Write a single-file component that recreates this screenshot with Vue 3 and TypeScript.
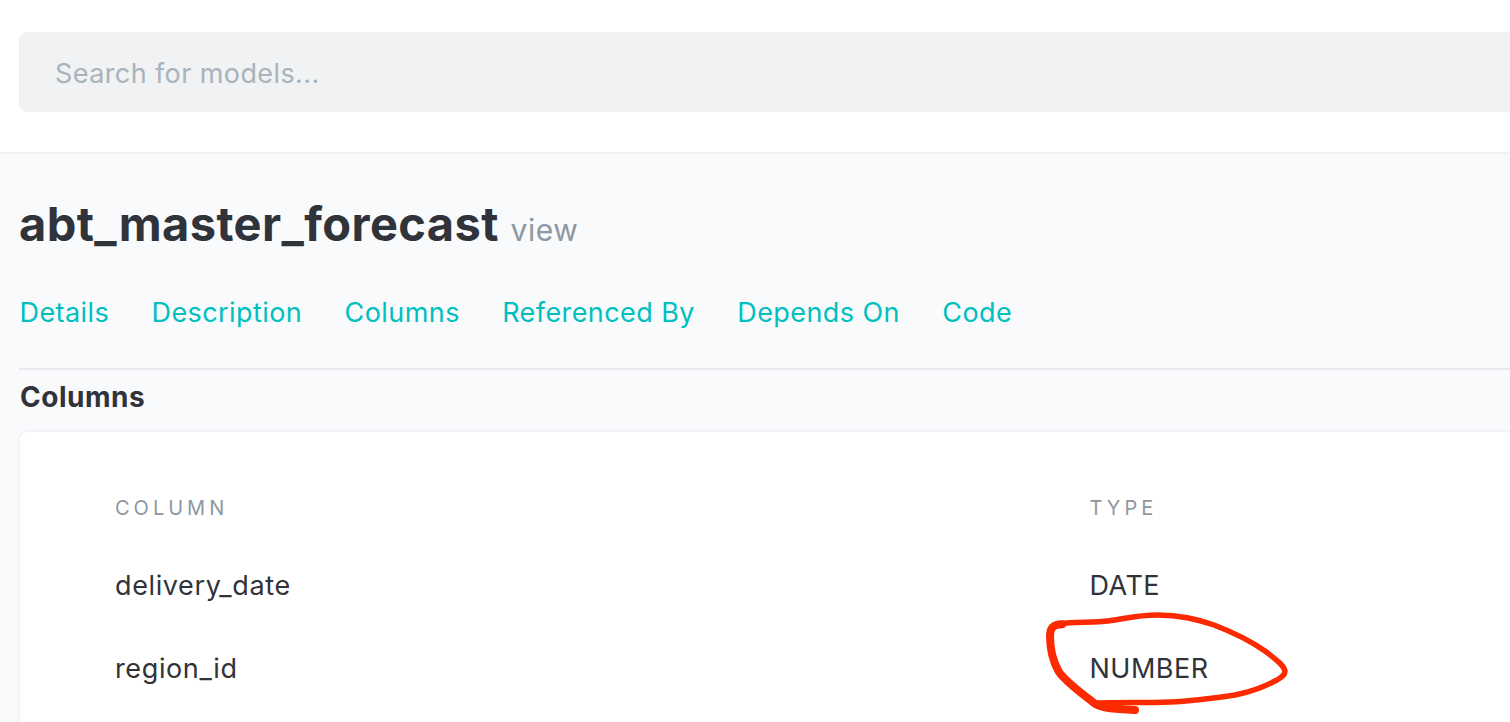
<script setup lang="ts">
const tabs = ['Details', 'Description', 'Columns', 'Referenced By', 'Depends On', 'Code']

const columns = [
  { name: 'delivery_date', type: 'DATE' },
  { name: 'region_id', type: 'NUMBER' },
]
</script>

<template>
  <div class="page">
    <header class="top">
      <div class="search">Search for models...</div>
    </header>
    <main class="content">
      <h1 class="title">abt_master_forecast <small>view</small></h1>
      <nav class="tabs">
        <a v-for="tab in tabs" :key="tab">{{ tab }}</a>
      </nav>
      <section class="section">
        <h2>Columns</h2>
        <div class="card">
          <div class="row head">
            <span>COLUMN</span>
            <span>TYPE</span>
          </div>
          <div v-for="col in columns" :key="col.name" class="row">
            <span class="name">{{ col.name }}</span>
            <span>{{ col.type }}</span>
          </div>
        </div>
      </section>
    </main>
    <svg class="scribble" width="280" height="132" viewBox="1030 590 280 132" fill="none" stroke="#fb2a00" stroke-linecap="round" stroke-linejoin="round">
      <path stroke-width="5.5" d="M1060 623.5 C1075 622 1095 622.5 1108 621 C1125 619 1135 615 1158 615 C1180 615 1195 619 1214 625 C1235 633 1252 642 1265 651 C1274 658 1284 665 1285 671 C1285 675 1282 677 1277 680 C1265 686 1255 691 1235 695 C1215 698 1195 701 1170 702 C1145 703 1120 702 1097 703" />
      <path stroke-width="8" d="M1062 624.3 C1053 624.5 1050 628 1050 636 C1050 650 1052 660 1059 672 C1066 682 1080 692 1094 703 C1101 708 1112 709 1135 710" />
    </svg>
  </div>
</template>

<style scoped>
.page {
  position: relative;
  width: 1510px;
  height: 722px;
  overflow: hidden;
  background: #fff;
  font-family: Inter, "Liberation Sans", sans-serif;
  color: #30333a;
}

.top {
  box-sizing: border-box;
  height: 154px;
  padding: 32px 0 0 19px;
  border-bottom: 2px solid #eff1f3;
}

.search {
  box-sizing: border-box;
  width: 1600px;
  height: 80px;
  padding-left: 36px;
  border-radius: 8px;
  background: #f0f2f4;
  color: #a9b3bb;
  font-size: 27px;
  letter-spacing: 0.4px;
  line-height: 83px;
}

.content {
  box-sizing: border-box;
  height: 568px;
  padding: 40px 0 0 19px;
  background: #f9fafc;
}

.title {
  margin: 0;
  font-size: 47px;
  font-weight: 700;
  letter-spacing: 0.4px;
  line-height: 60px;
}

.title small {
  color: #8d98a2;
  font-size: 30px;
  font-weight: 400;
  letter-spacing: 0.6px;
}

.tabs {
  display: flex;
  gap: 42.4px;
  margin-top: 35px;
  padding-left: 0.5px;
  color: #00bfbf;
  font-size: 27px;
  letter-spacing: 0.42px;
  line-height: 36px;
}

.section {
  margin-top: 37px;
  border-top: 2px solid #e7e9ec;
}

h2 {
  margin: 0;
  padding-left: 1px;
  font-size: 28px;
  font-weight: 700;
  letter-spacing: 0.5px;
  line-height: 54px;
}

.card {
  box-sizing: border-box;
  width: 1600px;
  height: 400px;
  margin: 6px 0 0 -1px;
  padding: 50px 0 0 95px;
  border: 2px solid #f2f3f6;
  border-radius: 10px;
  background: #fff;
}

.row {
  display: grid;
  grid-template-columns: 974.5px 1fr;
  height: 83px;
  font-size: 27px;
  letter-spacing: 0.5px;
  line-height: 83px;
}

.row .name {
  letter-spacing: 0.62px;
}

.row.head {
  height: 62px;
  color: #8d98a2;
  font-size: 20px;
  letter-spacing: 4px;
  line-height: 52px;
}

.scribble {
  position: absolute;
  top: 590px;
  left: 1030px;
}
</style>

<style>
html,
body {
  margin: 0;
  overflow: hidden;
}
</style>
